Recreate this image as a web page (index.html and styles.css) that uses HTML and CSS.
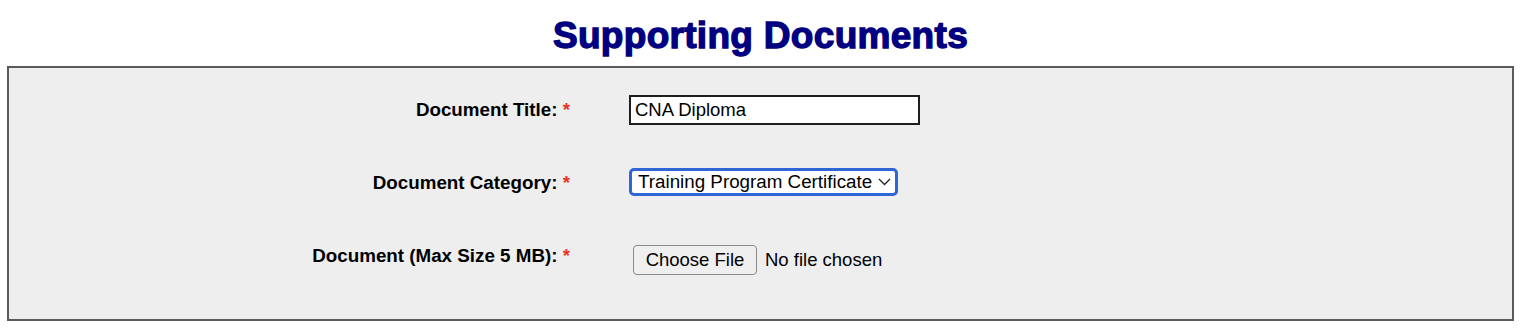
FILE: index.html
```html
<!DOCTYPE html>
<html lang="en">
  <head>
    <meta charset="UTF-8" />
    <meta name="viewport" content="width=device-width, initial-scale=1.0" />
    <title>Supporting Documents</title>
    <link rel="stylesheet" href="styles.css">
  </head>
  <body>
    <div class="page">
      <h1 class="page-title">Supporting Documents</h1>

      <div class="doc-form">
        <!-- 제목 -->
        <label class="doc-label" for="docTitle">Document Title: <span class="req">*</span></label>
        <div class="doc-field">
          <input type="text" id="docTitle" class="doc-input" value="CNA Diploma" />
        </div>

        <!-- 분류 -->
        <label class="doc-label" for="docCategory">Document Category: <span class="req">*</span></label>
        <div class="doc-field">
          <span class="doc-select">
            <select id="docCategory">
              <option>Training Program Certificate</option>
            </select>
            <svg class="doc-select-arrow" width="13" height="8" viewBox="0 0 13 8">
              <path d="M1 1 L6.5 6.5 L12 1" fill="none" stroke="#222" stroke-width="1.3" />
            </svg>
          </span>
        </div>

        <!-- 파일 -->
        <label class="doc-label" for="docFile">Document (Max Size 5 MB): <span class="req">*</span></label>
        <div class="doc-field">
          <input type="file" id="docFile" class="doc-file" />
        </div>
      </div>
    </div>
  </body>
</html>
```

FILE: styles.css
```css
html, body {
  margin: 0;
  padding: 0;
  background: #fff;
}

body {
  font-family: "Liberation Sans", Arial, sans-serif;
  color: #000;
}

.page {
  width: 1507px;
  margin-left: 7px;
}

.page-title {
  margin: 15px 0 9px;
  font-size: 37px;
  line-height: 42px;
  font-weight: bold;
  text-align: center;
  color: #000080;
  -webkit-text-stroke: 1.3px #000080;
  letter-spacing: 0.3px;
}

.doc-form {
  display: grid;
  grid-template-columns: 561px 1fr;
  grid-auto-rows: 40px;
  column-gap: 59px;
  row-gap: 33px;
  padding: 22px 0 43px;
  background: #eeeeee;
  border: 2px solid #5a5a5a;
}

.doc-label {
  display: flex;
  align-items: center;
  justify-content: flex-end;
  font-size: 18.8px;
  font-weight: bold;
  white-space: pre;
}

.req {
  color: #e8322c;
}

.doc-field {
  display: flex;
  align-items: center;
}

.doc-input {
  box-sizing: border-box;
  width: 291px;
  height: 30px;
  padding: 1px 4px;
  border: 2px solid #1e1e1e;
  background: #fff;
  font-family: "Liberation Sans", Arial, sans-serif;
  font-size: 18.5px;
  color: #000;
  outline: none;
}

.doc-select {
  box-sizing: border-box;
  display: inline-flex;
  align-items: center;
  width: 269px;
  height: 28px;
  margin-top: -3px;
  padding: 0 4px 0 6px;
  background: #fff;
  border: 3px solid #2f66d6;
  border-radius: 5px;
}

.doc-select select {
  flex: none;
  width: 234px;
  margin-right: 6px;
  appearance: none;
  -webkit-appearance: none;
  border: 0;
  padding: 0;
  background: transparent;
  font-family: "Liberation Sans", Arial, sans-serif;
  font-size: 18.8px;
  color: #000;
  outline: none;
}

.doc-select-arrow {
  flex: none;
}

.doc-file {
  margin-left: 4px;
  margin-top: 8px;
  font-family: "Liberation Sans", Arial, sans-serif;
  font-size: 18.5px;
  color: #000;
}

.doc-file::file-selector-button {
  box-sizing: border-box;
  width: 124px;
  height: 30px;
  margin-right: 8px;
  padding: 0;
  border: 1px solid #8a8a8a;
  border-radius: 4px;
  background: #efefef;
  font-family: "Liberation Sans", Arial, sans-serif;
  font-size: 18.5px;
  color: #000;
}
```
